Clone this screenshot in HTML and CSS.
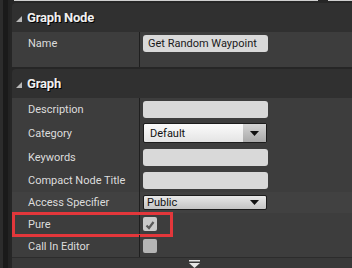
FILE: index.html
```html
<!DOCTYPE html>
<html lang="en">
<head>
  <meta charset="UTF-8">
  <title>Details - Graph</title>
  <link rel="stylesheet" href="styles.css">
</head>
<body>
  <div class="gutter"></div>

  <div class="details">
    <div class="topbar">
      <div class="search"></div>
      <div class="search small"></div>
    </div>

    <section class="category">
      <div class="cat-header">
        <svg class="caret" width="6" height="6" viewBox="0 0 6 6"><polygon points="6,0 6,6 0,6" fill="#b8b8b8"/></svg>
        Graph Node
      </div>
      <div class="cat-body spaced">
        <div class="row">
          <div class="label">Name</div>
          <div class="value"><div class="textbox">Get Random Waypoint</div></div>
        </div>
      </div>
    </section>

    <section class="category grow">
      <div class="cat-header">
        <svg class="caret" width="6" height="6" viewBox="0 0 6 6"><polygon points="6,0 6,6 0,6" fill="#b8b8b8"/></svg>
        Graph
      </div>
      <div class="cat-body">
        <div class="row">
          <div class="label">Description</div>
          <div class="value"><div class="textbox"></div></div>
        </div>
        <div class="row">
          <div class="label">Category</div>
          <div class="value">
            <div class="combo">
              <span class="combo-text">Default</span>
              <span class="combo-btn"><svg width="9" height="5" viewBox="0 0 9 5"><polygon points="0,0 9,0 4.5,5" fill="#111"/></svg></span>
            </div>
          </div>
        </div>
        <div class="row">
          <div class="label">Keywords</div>
          <div class="value"><div class="textbox"></div></div>
        </div>
        <div class="row">
          <div class="label">Compact Node Title</div>
          <div class="value"><div class="textbox"></div></div>
        </div>
        <div class="row hover">
          <div class="label">Access Specifier</div>
          <div class="value">
            <div class="combo thin">
              <span class="combo-text">Public</span>
              <span class="combo-btn"><svg width="9" height="5" viewBox="0 0 9 5"><polygon points="0,0 9,0 4.5,5" fill="#111"/></svg></span>
            </div>
          </div>
        </div>
        <div class="row marked">
          <div class="label">Pure</div>
          <div class="value">
            <div class="checkbox checked">
              <svg width="14" height="14" viewBox="0 0 14 14"><polyline points="3.5,7.5 6,10 10.5,4" fill="none" stroke="#5a5a5a" stroke-width="2.2"/></svg>
            </div>
          </div>
          <div class="highlight"></div>
        </div>
        <div class="row">
          <div class="label">Call In Editor</div>
          <div class="value"><div class="checkbox"></div></div>
        </div>
      </div>
      <div class="more">
        <svg width="11" height="8" viewBox="0 0 11 8"><rect x="0" y="0" width="11" height="1.5" fill="#e6e6e6"/><polygon points="0,3 11,3 5.5,8" fill="#e6e6e6"/></svg>
      </div>
    </section>
  </div>
</body>
</html>
```

FILE: styles.css
```css
* {
  margin: 0;
  padding: 0;
  box-sizing: border-box;
}

body {
  font-family: Roboto, 'Liberation Sans', sans-serif;
  background-color: #262626;
  color: #dcdcdc;
  width: 352px;
  height: 268px;
  overflow: hidden;
  display: flex;
}

.gutter {
  flex: none;
  width: 12px;
  background: linear-gradient(to right, #2c2c2c 0 3px, #1a1a1a 3px 8px, #232323 8px 10px, #262626 10px);
}

.details {
  flex: 1;
  min-width: 0;
  display: flex;
  flex-direction: column;
  gap: 2px;
}

.topbar {
  height: 2px;
  display: flex;
  gap: 10px;
  padding-left: 2px;
}

.search {
  width: 304px;
  background-color: #cfcfcf;
}

.search.small {
  width: auto;
  flex: 1;
}

.category {
  display: flex;
  flex-direction: column;
}

.category.grow {
  flex: 1;
}

.cat-header {
  height: 29px;
  background-color: #303030;
  border-top-left-radius: 4px;
  display: flex;
  align-items: center;
  gap: 5px;
  padding-left: 4px;
  font-size: 13px;
  font-weight: bold;
  letter-spacing: -0.2px;
  color: #f0f0f0;
  text-shadow: 1px 1px 0 #000;
}

.caret {
  margin-top: 3px;
}

.cat-body {
  background-color: #3d3d3d;
}

.cat-body.spaced {
  padding-bottom: 12px;
  background: linear-gradient(to right, #3d3d3d 127px, #1f1f1f 127px 128px, #3d3d3d 128px);
}

.row {
  display: flex;
  position: relative;
}

.row.hover {
  background-color: #414141;
}

.label {
  width: 127px;
  padding-left: 16px;
  font-size: 11px;
  display: flex;
  align-items: center;
  white-space: nowrap;
}

.value {
  flex: 1;
  border-left: 1px solid #1f1f1f;
  padding-left: 3px;
  display: flex;
  align-items: center;
}

.textbox {
  width: 125px;
  height: 17px;
  margin: 3px 0;
  border-radius: 3px;
  background-color: #d9d9d9;
  color: #1a1a1a;
  font-size: 11px;
  line-height: 17px;
  padding-left: 5px;
}

.combo {
  width: 124px;
  height: 20px;
  margin: 2px 0 3px;
  border: 1px solid #1c1c1c;
  border-radius: 2px;
  display: flex;
  background: linear-gradient(#fbfbfb, #e4e4e4);
  color: #111;
  font-size: 11px;
}

.combo.thin {
  height: 15px;
  margin: 3px 0;
  background: linear-gradient(#e8e8e8, #c4c4c4);
}

.combo-text {
  flex: 1;
  padding-left: 6px;
  display: flex;
  align-items: center;
}

.combo.thin .combo-text {
  padding-left: 3px;
}

.combo-btn {
  width: 23px;
  display: flex;
  align-items: center;
  justify-content: center;
  background: linear-gradient(#d4d4d4, #a9a9a9);
}

.combo.thin .combo-btn {
  background: none;
}

.checkbox {
  width: 14px;
  height: 14px;
  margin: 4px 0;
  border-radius: 2px;
  background-color: #b4b4b4;
}

.checkbox.checked {
  background-color: #cacaca;
}

.highlight {
  position: absolute;
  left: 0;
  top: -1px;
  width: 161px;
  height: 25px;
  border: 3px solid #e3373b;
}

.more {
  flex: 1;
  background-color: #393939;
  border-top: 1px solid #2c2c2c;
  display: flex;
  justify-content: center;
  padding: 2px 0 0 24px;
}
```
